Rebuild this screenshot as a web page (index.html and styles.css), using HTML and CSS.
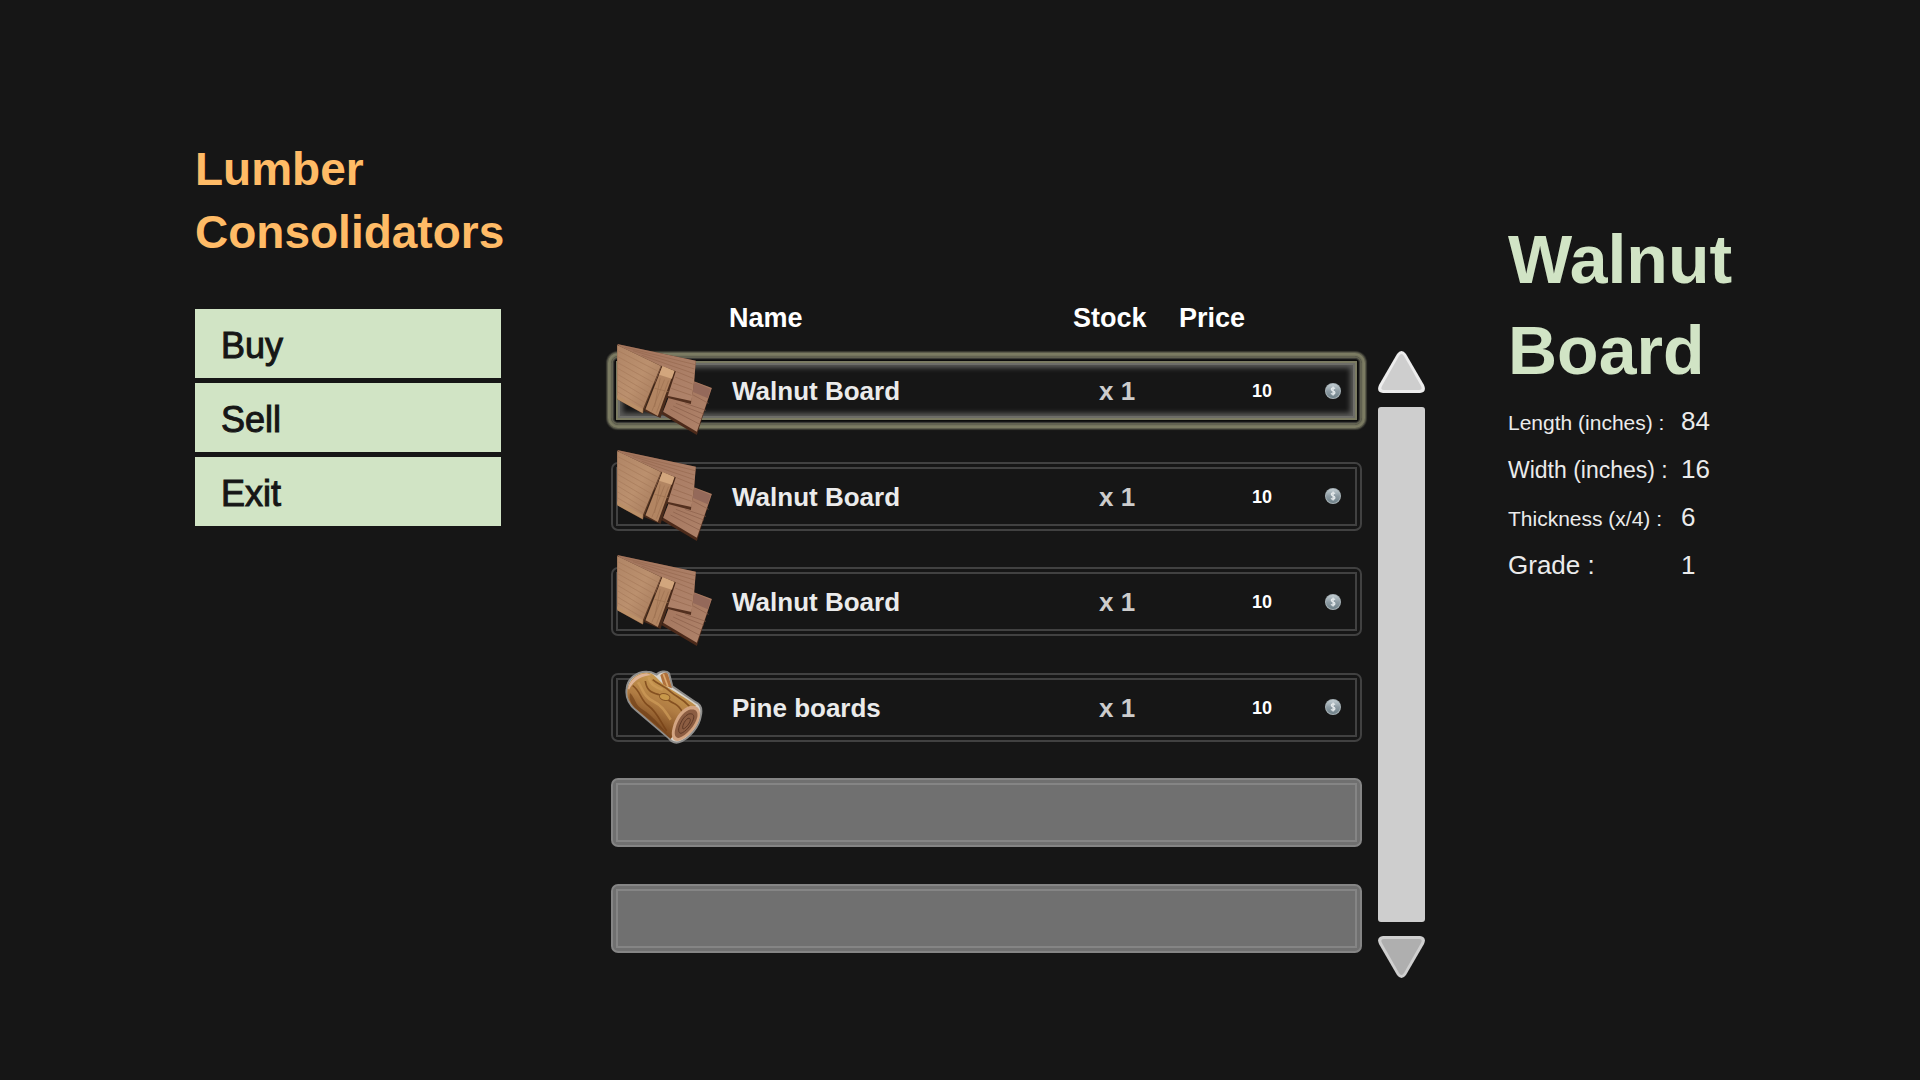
FILE: index.html
```html
<!DOCTYPE html>
<html lang="en">
  <head>
    <meta charset="UTF-8" />
    <meta name="viewport" content="width=device-width, initial-scale=1.0" />
    <title>Lumber Consolidators</title>
    <link rel="stylesheet" href="styles.css">
  </head>
  <body>
    <!-- shared item icons -->
    <svg class="sprites" aria-hidden="true">
      <defs>
        <linearGradient id="wood-light" x1="0" y1="0" x2="1" y2="1">
          <stop offset="0" stop-color="#b08566" />
          <stop offset="0.5" stop-color="#bb906e" />
          <stop offset="1" stop-color="#a17557" />
        </linearGradient>
        <linearGradient id="wood-dark" x1="0" y1="0" x2="1" y2="1">
          <stop offset="0" stop-color="#a2745c" />
          <stop offset="1" stop-color="#b0846b" />
        </linearGradient>
        <linearGradient id="bark" x1="0.7" y1="0.1" x2="0.3" y2="0.9">
          <stop offset="0" stop-color="#cda052" />
          <stop offset="0.5" stop-color="#b07c43" />
          <stop offset="1" stop-color="#6e3c16" />
        </linearGradient>
        <linearGradient id="silver" x1="0" y1="0" x2="0" y2="1">
          <stop offset="0" stop-color="#c3ced3" />
          <stop offset="0.5" stop-color="#8d9ba3" />
          <stop offset="1" stop-color="#6f8189" />
        </linearGradient>
      </defs>
      <symbol id="boards" viewBox="36 27 284 273">
        <path d="M264 138L320 159L275 300L170 238L190 188Z" fill="#4c2a1a" />
        <path d="M264 138L320 159L275 290L174 230L190 188Z" fill="url(#wood-dark)" />
        <path d="M268 142L317 162L308 190L262 170Z" fill="#94695a" />
        <path d="M212 205L296 237M204 213L290 252M196 222L284 268M240 205L302 226M264 180L310 205" stroke="#8a5d48" stroke-width="2" fill="none" />
        <path d="M36 27L272 77L267 140L257 207L186 188Z" fill="#53301f" />
        <path d="M36 27L272 77L267 138L259 198L186 182Z" fill="url(#wood-dark)" />
        <path d="M60 37L270 89M84 47L268 102M110 61L267 116M214 110L264 130M210 126L262 147M204 144L261 165M198 160L259 181" stroke="#95684f" stroke-width="2" fill="none" />
        <path d="M36 30L168 93L113 236L36 193Z" fill="#5b3923" />
        <path d="M36 30L167 93L111 227L36 188Z" fill="url(#wood-light)" />
        <path d="M36 46L157 108M36 64L150 126M36 82L144 142M36 99L138 158M36 117L130 173M36 134L125 188M36 152L120 203M36 170L114 216" stroke="#a67a5a" stroke-width="2" fill="none" />
        <path d="M36 181L113 222V235L36 193Z" fill="#ba8f68" />
        <path d="M169 92L212 109L166 249L117 228Z" fill="#4a2b1b" />
        <path d="M172 93L207 108L158 243L121 223Z" fill="#b28562" />
        <path d="M172 93L208 108L200 131L162 119Z" fill="#d2a67d" />
        <path d="M165 130L148 216M178 134L140 229M190 137L154 233M148 160L190 170" stroke="#9c7050" stroke-width="2" fill="none" />
      </symbol>
      <symbol id="log" viewBox="72 26 240 228">
        <path d="M80 85C82 58 108 32 142 34C154 34 160 38 170 43C177 33 199 29 207 39L217 78L286 125C303 132 307 148 302 168C298 198 268 236 236 246C224 249 212 242 205 232L108 150C86 132 76 112 80 85Z" fill="#d9d4cb" stroke="#8f8e8c" stroke-width="6" stroke-linejoin="round" />
        <path d="M181 45C188 36 201 35 204 42L216 84L190 75Z" fill="#b0713c" />
        <path d="M190 41L204 79" stroke="#dcab70" stroke-width="5" />
        <path d="M82 88C86 60 110 36 142 37C162 38 168 52 188 70C218 92 258 112 288 136L212 236L112 150C88 130 80 112 82 88Z" fill="url(#bark)" />
        <path d="M84 84C90 60 112 40 140 39L154 44C128 46 102 58 87 88Z" fill="#dfb497" />
        <path d="M90 98C106 112 104 134 130 149C158 166 174 190 206 224L112 148C92 132 86 116 90 98Z" fill="#6b3a14" opacity="0.6" />
        <path d="M98 76C122 92 122 122 146 137C170 154 178 178 200 212M136 62C140 90 152 96 174 102C198 110 204 122 224 130C240 138 244 150 250 160M158 58C176 74 194 76 214 96C230 110 248 114 268 138" stroke="#743f14" stroke-width="5" fill="none" opacity="0.75" />
        <path d="M114 66C130 88 130 110 162 124C184 134 196 154 212 178M146 50C150 72 170 84 188 88" stroke="#cf9d5a" stroke-width="8" fill="none" opacity="0.7" />
        <ellipse cx="194" cy="110" rx="16" ry="10" transform="rotate(14 194 110)" fill="#c7984a" stroke="#8a5827" stroke-width="3" />
        <path d="M262 140C287 130 302 142 300 166C296 198 264 234 234 242C216 243 212 224 218 202C224 176 240 150 262 140Z" fill="#d3a481" />
        <path d="M266 149C286 144 295 152 292 170C286 196 260 226 236 233C223 232 222 218 227 202C233 180 248 157 266 149Z" fill="#8c5d42" />
        <path d="M266 161C279 158 284 165 280 177C273 196 257 214 243 219C233 218 235 204 240 193C246 177 255 166 266 161ZM264 174C272 173 273 179 268 188C261 199 254 205 249 206C245 202 252 181 264 174Z" fill="none" stroke="#5f3926" stroke-width="3" />
      </symbol>
      <symbol id="coin" viewBox="0 0 16 16">
        <circle cx="8" cy="8" r="8" fill="#a7b2b7" />
        <circle cx="8" cy="8" r="7" fill="url(#silver)" />
        <path d="M10 5.6C9 4.4 6.2 4.6 6.3 6.3C6.4 8 9.9 7.7 9.9 9.7C9.900 11.4 7 11.5 6 10.3M8.1 3.4V12.6" stroke="#e4e9eb" stroke-width="1.3" fill="none" />
      </symbol>
    </svg>

    <main class="shop">
      <nav class="menu">
        <h1>Lumber Consolidators</h1>
        <button class="menu-btn">Buy</button>
        <button class="menu-btn">Sell</button>
        <button class="menu-btn">Exit</button>
      </nav>

      <section class="stock">
        <table class="items">
          <thead>
            <tr>
              <th class="name">Name</th>
              <th>Stock</th>
              <th>Price</th>
            </tr>
          </thead>
          <tbody>
            <tr class="selected">
              <td class="name"><svg class="boards-icon"><use href="#boards" /></svg>Walnut Board</td>
              <td class="count">x 1</td>
              <td class="price">10</td>
              <td class="coin"><svg><use href="#coin" /></svg></td>
            </tr>
            <tr>
              <td class="name"><svg class="boards-icon"><use href="#boards" /></svg>Walnut Board</td>
              <td class="count">x 1</td>
              <td class="price">10</td>
              <td class="coin"><svg><use href="#coin" /></svg></td>
            </tr>
            <tr>
              <td class="name"><svg class="boards-icon"><use href="#boards" /></svg>Walnut Board</td>
              <td class="count">x 1</td>
              <td class="price">10</td>
              <td class="coin"><svg><use href="#coin" /></svg></td>
            </tr>
            <tr>
              <td class="name"><svg class="log-icon"><use href="#log" /></svg>Pine boards</td>
              <td class="count">x 1</td>
              <td class="price">10</td>
              <td class="coin"><svg><use href="#coin" /></svg></td>
            </tr>
            <tr class="empty"><td></td></tr>
            <tr class="empty"><td></td></tr>
          </tbody>
        </table>

        <div class="scroll">
          <button class="arrow" aria-label="Scroll up">
            <svg viewBox="0 0 47 42"><path d="M19 3Q23.5 -3 28 3L46 34Q49 41 42 42H5Q-2 41 1 34Z" fill="#ededed" /><path d="M21 5Q23.5 1 26 5L43 35Q45 39 41 39H6Q2 39 4 35Z" fill="#cecece" /></svg>
          </button>
          <div class="thumb"></div>
          <button class="arrow" aria-label="Scroll down">
            <svg viewBox="0 0 47 42"><path d="M19 39Q23.5 45 28 39L46 8Q49 1 42 0H5Q-2 1 1 8Z" fill="#cfcfcf" /><path d="M21 37Q23.5 41 26 37L43 7Q45 3 41 3H6Q2 3 4 7Z" fill="#afafaf" /></svg>
          </button>
        </div>
      </section>

      <aside class="details">
        <h2>Walnut Board</h2>
        <dl>
          <dt>Length (inches) :</dt>
          <dd>84</dd>
          <dt class="medium">Width (inches) :</dt>
          <dd>16</dd>
          <dt>Thickness (x/4) :</dt>
          <dd>6</dd>
          <dt class="large">Grade :</dt>
          <dd>1</dd>
        </dl>
      </aside>
    </main>
  </body>
</html>
```

FILE: styles.css
```css
body {
  margin: 0;
  background-color: #161616;
  color: white;
  font-family: "Liberation Sans", Arial, Helvetica, sans-serif;
}

h1,
h2,
dl,
dd {
  margin: 0;
}

button {
  border: none;
  padding: 0;
  font-family: inherit;
  text-align: left;
  cursor: pointer;
}

.sprites {
  position: absolute;
  width: 0;
  height: 0;
}

.shop {
  display: grid;
  grid-template-columns: 306px minmax(0, 1fr) 235px;
  align-items: start;
  padding: 0 177px 0 195px;
}

/* left menu */
.menu {
  display: flex;
  flex-direction: column;
  gap: 5px;
  padding-top: 138px;
}

h1 {
  margin-bottom: 40px;
  color: #ffbb66;
  font-size: 46px;
  line-height: 63px;
}

.menu-btn {
  height: 69px;
  padding: 4px 26px 0;
  background-color: #d1e4c5;
  color: #161616;
  font-size: 36px;
  -webkit-text-stroke: 1px #161616;
}

/* item list */
.stock {
  display: grid;
  grid-template-columns: minmax(0, 1fr) 47px;
  column-gap: 16px;
  margin: 0 83px 0 110px;
  padding-top: 297px;
}

.items {
  display: contents;
}

thead {
  grid-column: 1 / -1;
  margin-right: 63px;
}

tbody {
  display: flex;
  flex-direction: column;
  justify-content: space-between;
  padding: 5px 0 25px;
}

tr {
  display: grid;
  grid-template-columns: minmax(0, 1fr) 106px 120px 63px;
  align-items: center;
}

th,
td {
  padding: 0;
  text-align: left;
}

th {
  font-size: 27px;
  line-height: 42px;
  padding-bottom: 12px;
}

th.name {
  padding-left: 118px;
}

tbody tr {
  position: relative;
  box-sizing: border-box;
  height: 69px;
  border: 2px solid #414141;
  border-radius: 7px;
}

tbody tr::before {
  content: "";
  position: absolute;
  inset: 3px;
  border: 2px solid #414141;
}

tbody .selected {
  border-color: #626251;
  box-shadow: 0 0 0 1px #74745d, 0 0 0 3px #7b7b62, 0 0 0 4px #5c5c4c, 0 0 1px 5px #3c3c34, inset 0 0 0 1px #3c3c38;
}

tbody .selected::before {
  border: 2px solid #7b7b62;
  box-shadow: 0 0 0 1px #0b0b0b, inset 0 0 0 2px #6d6d68, inset 0 0 5px 5px #5a5a58;
}

.empty {
  background-color: #707070;
}

tbody .empty,
tbody .empty::before {
  border-color: #858585;
}

td {
  position: relative;
  padding-top: 2px;
  color: #ebebeb;
  font-size: 26px;
  font-weight: bold;
}

td.name {
  padding-left: 119px;
}

.count {
  padding-left: 28px;
  color: #cccccc;
}

.price {
  padding-left: 75px;
  color: white;
  font-size: 18px;
}

.coin {
  padding-top: 0;
}

.coin svg {
  display: block;
  width: 16px;
  height: 16px;
  margin-left: 28px;
}

/* icons hang out over the row frame */
.boards-icon {
  position: absolute;
  left: 4px;
  top: -30px;
  width: 95px;
  height: 91px;
}

.log-icon {
  position: absolute;
  left: 11px;
  top: -22px;
  width: 80px;
  height: 76px;
}

.scroll {
  display: flex;
  flex-direction: column;
  gap: 14px;
}

.arrow {
  height: 42px;
  background: none;
}

.arrow svg {
  display: block;
}

.thumb {
  height: 515px;
  background-color: #cecece;
  border-radius: 3px;
}

/* selected item */
.details {
  padding-top: 214px;
}

h2 {
  color: #d1e4c5;
  font-size: 68px;
  line-height: 91px;
}

dl {
  display: grid;
  grid-template-columns: 173px 1fr;
  align-items: baseline;
  margin-top: 2px;
  color: #ebebeb;
  font-size: 26px;
  line-height: 47px;
}

dt {
  font-size: 21px;
}

.medium {
  font-size: 23px;
}

.large {
  font-size: 26px;
}
```
